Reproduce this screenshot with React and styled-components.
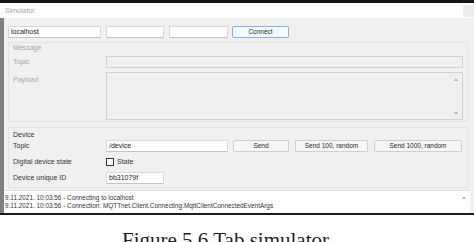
import React from 'react';
import styled, { createGlobalStyle } from 'styled-components';

const GlobalStyle = createGlobalStyle`
  html, body {
    margin: 0;
    padding: 0;
    background: #fff;
    overflow: hidden;
  }
  body {
    font-family: "Liberation Sans", Arial, sans-serif;
  }
`;

const Page = styled.div`
  width: 474px;
  height: 242px;
  display: flex;
  flex-direction: column;
  overflow: hidden;
`;

const Window = styled.div`
  display: flex;
  flex-direction: column;
  border-top: 3px solid #141414;
  border-bottom: 2px solid #1c1c1c;
`;

const TitleBar = styled.div`
  height: 15px;
  background: #fff;
  display: flex;
  align-items: center;
  justify-content: space-between;
  padding-left: 5px;
  font-size: 7px;
  color: #a3a3a3;
`;

const CloseBox = styled.div`
  width: 11px;
  height: 12px;
  background: #ececec;
`;

const Body = styled.div`
  background: #f0f0f0;
  border-left: 4px solid #808080;
  display: flex;
  flex-direction: column;
`;

const Content = styled.div`
  padding: 8px 6px 0 4px;
  display: flex;
  flex-direction: column;
`;

const TopRow = styled.div`
  display: flex;
  align-items: center;
  height: 12px;
  gap: 5px;
`;

const Field = styled.div`
  box-sizing: border-box;
  width: ${p => p.$w ? `${p.$w}px` : 'auto'};
  flex: ${p => p.$w ? 'none' : '1'};
  height: ${p => p.$h || 12}px;
  background: ${p => p.$disabled ? '#f0f0f0' : '#fff'};
  border: 1px solid ${p => p.$disabled ? '#d2d2d2' : '#d9d9d9'};
  border-bottom-color: ${p => p.$disabled ? '#d2d2d2' : '#c4c4c4'};
  font-size: 7px;
  line-height: 10px;
  color: #222;
  padding-left: 2px;
  position: relative;
`;

const Button = styled.div`
  box-sizing: border-box;
  width: ${p => p.$w}px;
  height: 12px;
  flex: none;
  background: ${p => p.$primary ? '#f4f9fd' : '#f6f6f6'};
  border: 1px solid ${p => p.$primary ? '#7eb4ea' : '#cfcfcf'};
  border-radius: ${p => p.$primary ? '2px' : '1px'};
  font-size: 6.5px;
  line-height: 10px;
  color: #2a2a2a;
  text-align: center;
  margin-left: ${p => p.$ml || 0}px;
`;

const Group = styled.div`
  box-sizing: border-box;
  border: 1px solid #e3e3e3;
  margin-top: ${p => p.$mt}px;
  padding: ${p => p.$pt}px 4px ${p => p.$pb}px 4px;
  display: flex;
  flex-direction: column;
  gap: ${p => p.$gap}px;
`;

const GroupTitle = styled.div`
  font-size: 7px;
  line-height: 10px;
  color: ${p => p.$disabled ? '#a8a8a8' : '#333'};
`;

const FormRow = styled.div`
  display: grid;
  grid-template-columns: 93px 1fr;
  align-items: ${p => p.$top ? 'start' : 'center'};
  min-height: 12px;
`;

const Label = styled.div`
  font-size: 7px;
  line-height: 10px;
  color: ${p => p.$disabled ? '#a8a8a8' : '#333'};
  padding-top: ${p => p.$pt || 0}px;
`;

const Controls = styled.div`
  display: flex;
  align-items: center;
`;

const Arrow = styled.div`
  position: absolute;
  right: 4px;
  ${p => p.$down ? 'bottom: 4px;' : 'top: 5px;'}
  width: 0;
  height: 0;
  border-left: 2.5px solid transparent;
  border-right: 2.5px solid transparent;
  ${p => p.$down ? 'border-top: 3px solid #b4b4b4;' : 'border-bottom: 3px solid #b4b4b4;'}
`;

const CheckBox = styled.div`
  box-sizing: border-box;
  width: 8px;
  height: 8px;
  border: 1px solid #333;
  background: #fff;
  margin-right: 3px;
`;

const LogBox = styled.div`
  margin-top: 2px;
  margin-right: 4px;
  height: 23px;
  background: #fff;
  border-top: 1px solid #e0e0e0;
  padding: 3px 0 0 1px;
  box-sizing: border-box;
  font-size: 6.4px;
  line-height: 8px;
  color: #333;
  position: relative;
  white-space: nowrap;
`;

const Caption = styled.div`
  margin-top: 13px;
  padding-left: 122px;
  font-family: "Liberation Serif", "Times New Roman", serif;
  font-size: 21px;
  line-height: 24px;
  color: #1e1e1e;
  white-space: nowrap;
`;

export default function App() {
  return (
    <Page>
      <GlobalStyle />
      <Window>
        <TitleBar>
          Simulator
          <CloseBox />
        </TitleBar>
        <Body>
          <Content>
            <TopRow>
              <Field $w={93}>localhost</Field>
              <Field $w={58} />
              <Field $w={59} />
              <Button $w={57} $primary $ml={-1}>Connect</Button>
            </TopRow>

            <Group $mt={4} $pt={0} $pb={1} $gap={3}>
              <GroupTitle $disabled>Message</GroupTitle>
              <FormRow>
                <Label $disabled>Topic</Label>
                <Field $disabled />
              </FormRow>
              <FormRow $top style={{ marginTop: 1 }}>
                <Label $disabled $pt={3}>Payload</Label>
                <Field $disabled $h={48}>
                  <Arrow />
                  <Arrow $down />
                </Field>
              </FormRow>
            </Group>

            <Group $mt={5} $pt={2} $pb={3} $gap={4}>
              <GroupTitle style={{ marginBottom: -4 }}>Device</GroupTitle>
              <FormRow>
                <Label>Topic</Label>
                <Controls>
                  <Field $w={122}>/device</Field>
                  <Button $w={56} $ml={5}>Send</Button>
                  <Button $w={73} $ml={6}>Send 100, random</Button>
                  <Button $w={88} $ml={6}>Send 1000, random</Button>
                </Controls>
              </FormRow>
              <FormRow>
                <Label>Digital device state</Label>
                <Controls>
                  <CheckBox />
                  <Label>State</Label>
                </Controls>
              </FormRow>
              <FormRow>
                <Label>Device unique ID</Label>
                <Controls>
                  <Field $w={58}>bb31079f</Field>
                </Controls>
              </FormRow>
            </Group>
          </Content>

          <LogBox>
            9.11.2021. 10:03:56 - Connecting to localhost
            <br />
            9.11.2021. 10:03:56 - Connection: MQTTnet.Client.Connecting.MqttClientConnectedEventArgs
            <Arrow />
          </LogBox>
        </Body>
      </Window>
      <Caption>Figure 5.6 Tab simulator</Caption>
    </Page>
  );
}
